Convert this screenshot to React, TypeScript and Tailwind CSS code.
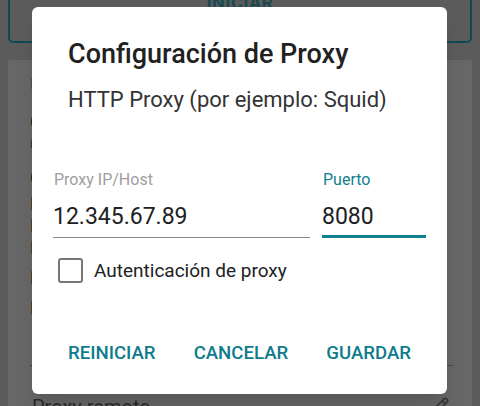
import { Pencil } from "lucide-react";

const font = { fontFamily: "Roboto, 'Noto Sans', sans-serif" };

// rows of the settings card that sit behind the dialog
const backRows = [
  { text: "Modo de conexión", cls: "text-[15px] text-[#4a4a4a] mt-[14px]" },
  { text: "Cliente", cls: "text-[18px] text-[#222] mt-[18px]" },
  { text: "i", cls: "text-[12px] text-[#333] mt-[2px]" },
  { text: "Conectar automáticamente", cls: "text-[18px] text-[#222] mt-[14px]" },
  { text: "DNS remoto", cls: "text-[18px] text-[#222] mt-[6px]" },
  { text: "Lista de hosts", cls: "text-[18px] text-[#222] mt-[2px]" },
  { text: "Puerto local", cls: "text-[18px] text-[#222] mt-[2px]" },
  { text: "Bloquear anuncios", cls: "text-[18px] text-[#222] mt-[10px]" },
  { text: "Limitar velocidad", cls: "text-[18px] text-[#222] mt-[10px]" },
];

function Background() {
  return (
    <div className="flex flex-col px-2">
      <div className="-mt-[30px] h-[73px] border-2 border-[#0f4a52] rounded-[5px] flex justify-center pt-[22px]">
        <span className="text-[18px] leading-[18px] font-bold text-[#1a4a50] tracking-wide">INICIAR</span>
      </div>
      <div className="mt-[17px] bg-[#676767] rounded-[3px] pl-[22px] pr-[19px] pb-[40px] flex flex-col">
        {backRows.map((r) => (
          <div key={r.text} className={`leading-[20px] whitespace-nowrap ${r.cls}`}>
            {r.text}
          </div>
        ))}
        <div className="mt-[47px] h-px shrink-0 bg-[#444]" />
        <div className="mt-[29px] flex items-start justify-between">
          <span className="text-[20px] leading-[24px] text-[#2a2a2a] ml-[2px]">Proxy remoto</span>
          <Pencil size={18} className="text-[#3a3a3a] mt-[2px] mr-[4px]" strokeWidth={2.5} />
        </div>
      </div>
    </div>
  );
}

function ProxyDialog() {
  return (
    <div className="absolute left-[32px] top-[7px] w-[415px] h-[387px] bg-white rounded-[6px] shadow-xl flex flex-col">
      <div className="pl-[36px] pt-[31px] text-[27px] leading-[32px] font-medium text-[#212121]">
        Configuración de Proxy
      </div>
      <div className="pl-[36px] mt-[17px] text-[22px] leading-[26px] text-[#333]">
        HTTP Proxy (por ejemplo: Squid)
      </div>

      <div className="px-[21px] mt-[57px] flex gap-[12px]">
        <div className="w-[257px] flex flex-col border-b border-[#8a8a8a] pb-[4px]">
          <span className="text-[16px] leading-[19px] text-[#9e9e9e] pl-[1px]">Proxy IP/Host</span>
          <span className="mt-[14px] text-[23px] leading-[28px] text-[#212121]">12.345.67.89</span>
        </div>
        <div className="flex-1 flex flex-col border-b-[3px] border-[#11808f] pb-[4px]">
          <span className="text-[16px] leading-[19px] text-[#11808f] pl-[1px]">Puerto</span>
          <span className="mt-[14px] text-[23px] leading-[28px] text-[#212121]">8080</span>
        </div>
      </div>

      <div className="pl-[26px] mt-[20px] flex items-center gap-[11px]">
        <div className="w-[25px] h-[25px] border-[2.5px] border-[#777] rounded-[3px]" />
        <span className="text-[19px] leading-[22px] text-[#212121]">Autenticación de proxy</span>
      </div>

      <div className="mt-auto mb-[30px] px-[36px] flex justify-between text-[18.6px] leading-[22px] font-medium text-[#0e7c8c]">
        <span>REINICIAR</span>
        <span>CANCELAR</span>
        <span>GUARDAR</span>
      </div>
    </div>
  );
}

export default function App() {
  return (
    <div style={font} className="relative w-[480px] h-[406px] overflow-hidden bg-[#5b5b5b]">
      <Background />
      <ProxyDialog />
    </div>
  );
}
